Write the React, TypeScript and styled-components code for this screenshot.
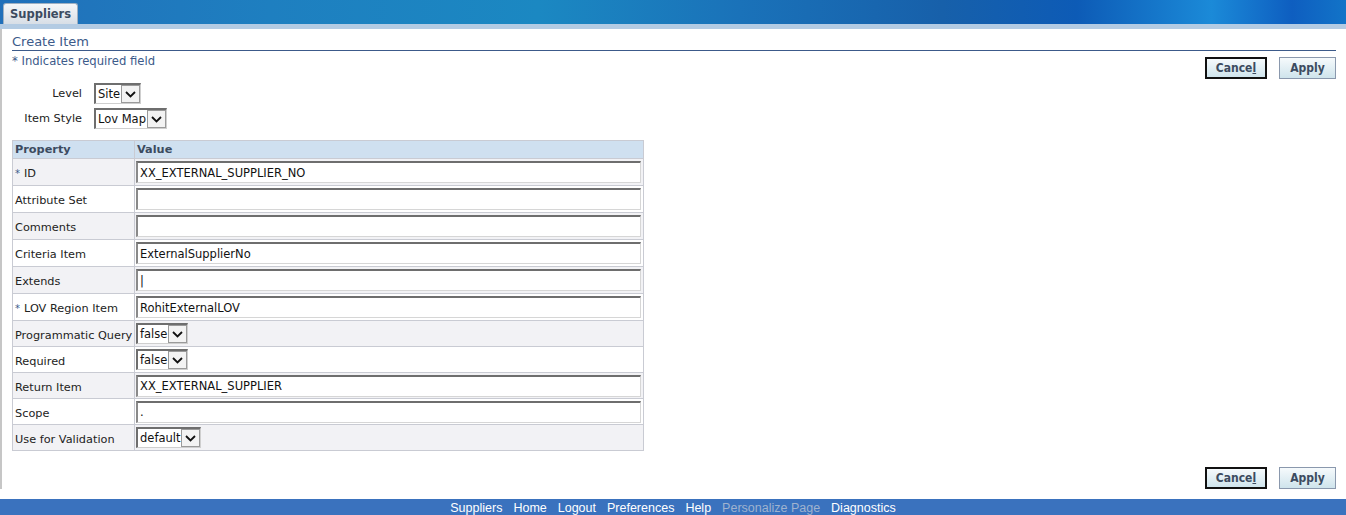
import styled, { createGlobalStyle } from "styled-components";

const GlobalStyle = createGlobalStyle`
  body {
    margin: 0;
    background: #ffffff;
    font-family: "DejaVu Sans", Tahoma, sans-serif;
  }
`;

const colors = {
  navy: "#3c5a8a",
  slate: "#3c4b60",
  cellBorder: "#c9cbd3",
  headerCell: "#cfe0f0",
  stripe: "#f2f2f5",
};

type RowType = "text" | "select";

interface PropRow {
  label: string;
  required?: boolean;
  type: RowType;
  value: string;
}

const rows: PropRow[] = [
  { label: "ID", required: true, type: "text", value: "XX_EXTERNAL_SUPPLIER_NO" },
  { label: "Attribute Set", type: "text", value: "" },
  { label: "Comments", type: "text", value: "" },
  { label: "Criteria Item", type: "text", value: "ExternalSupplierNo" },
  { label: "Extends", type: "text", value: "|" },
  { label: "LOV Region Item", required: true, type: "text", value: "RohitExternalLOV" },
  { label: "Programmatic Query", type: "select", value: "false" },
  { label: "Required", type: "select", value: "false" },
  { label: "Return Item", type: "text", value: "XX_EXTERNAL_SUPPLIER" },
  { label: "Scope", type: "text", value: "." },
  { label: "Use for Validation", type: "select", value: "default" },
];

const Page = styled.div`
  width: 1346px;
  height: 515px;
  overflow: hidden;
`;

const Banner = styled.div`
  height: 24px;
  display: flex;
  align-items: flex-end;
  padding-left: 3px;
  background: linear-gradient(
    90deg,
    #2170ba 0%,
    #1e7fc0 20%,
    #1b88c2 40%,
    #1a72b9 55%,
    #1760aa 70%,
    #0d5bb6 80%,
    #1b8ad8 90%,
    #0e5ec0 96%,
    #1274c8 100%
  );
`;

const Tab = styled.div`
  height: 20px;
  padding: 0 6px;
  display: flex;
  align-items: center;
  border: 1px solid #9fb0c2;
  border-bottom: none;
  border-radius: 3px 3px 0 0;
  background: linear-gradient(#f5f7f9, #d7dee6);
  color: ${colors.slate};
  font-size: 11.5px;
  font-weight: bold;
`;

const Stripe = styled.div`
  height: 5px;
  background: #b3cbe3;
`;

const Body = styled.div`
  display: flex;
  flex-direction: column;
  border-left: 2px solid #c6c6c6;
  padding: 0 10px 0 10px;
`;

const Title = styled.h1`
  margin: 4px 0 0;
  font-size: 13px;
  font-weight: normal;
  line-height: 17px;
  color: ${colors.navy};
  border-bottom: 1px solid ${colors.navy};
`;

const TopRow = styled.div`
  display: flex;
  justify-content: space-between;
  align-items: flex-start;
`;

const Hint = styled.div`
  margin-top: 3px;
  font-size: 11.6px;
  line-height: 14px;
  color: ${colors.navy};
`;

const Buttons = styled.div<{ $top: number }>`
  display: flex;
  gap: 12px;
  margin-top: ${({ $top }) => $top}px;
`;

const Button = styled.button<{ $focused?: boolean; $width: number }>`
  width: ${({ $width }) => $width}px;
  height: 22px;
  padding: 0;
  border: ${({ $focused }) => ($focused ? "2px solid #111" : "1px solid #8a98ad")};
  background: linear-gradient(#f6fafc, #cfe4ec);
  color: ${colors.slate};
  font-family: "DejaVu Sans Condensed", "DejaVu Sans", sans-serif;
  font-size: 12px;
  font-weight: bold;
  cursor: pointer;

  u {
    text-decoration-thickness: 1px;
  }
`;

const Form = styled.div`
  display: flex;
  flex-direction: column;
  gap: 4px;
  margin-top: 4px;
`;

const FormRow = styled.div`
  display: flex;
  align-items: center;
  gap: 12px;
`;

const FormLabel = styled.label`
  width: 70px;
  text-align: right;
  font-size: 11.3px;
  color: #222;
`;

const SelectBox = styled.div`
  display: inline-flex;
  align-items: stretch;
  height: 21px;
  box-sizing: border-box;
  border-top: 2px solid #6e6e6e;
  border-left: 2px solid #6e6e6e;
  border-right: 1px solid #cfcfcf;
  border-bottom: 1px solid #cfcfcf;
  background: #fff;
  font-size: 11.5px;
  color: #111;
`;

const SelectText = styled.span`
  display: flex;
  align-items: center;
  padding: 0 1px 0 2px;
`;

const Arrow = styled.span`
  width: 17px;
  display: flex;
  align-items: center;
  justify-content: center;
  border: 1px solid #9a9a9a;
  background: #f3f3f3;
`;

const Table = styled.table`
  margin-top: 11px;
  width: 632px;
  border-collapse: collapse;
  border: 1px solid #cfd1d8;
  font-size: 11.3px;
  color: #222;
`;

const Th = styled.th<{ $width?: number }>`
  width: ${({ $width }) => ($width ? `${$width}px` : "auto")};
  height: 17px;
  padding: 0 2px;
  text-align: left;
  background: ${colors.headerCell};
  border: 1px solid ${colors.cellBorder};
  color: ${colors.slate};
  font-weight: bold;
`;

const Tr = styled.tr<{ $shade: boolean }>`
  background: ${({ $shade }) => ($shade ? colors.stripe : "#ffffff")};
`;

const LabelCell = styled.td<{ $height: number }>`
  height: ${({ $height }) => $height}px;
  padding: 3px 0 0 2px;
  border: 1px solid ${colors.cellBorder};
  white-space: nowrap;
`;

const ValueCell = styled.td`
  padding: 1px;
  border: 1px solid ${colors.cellBorder};
`;

const Star = styled.span`
  color: ${colors.navy};
  font-size: 10px;
  margin-right: 4px;
`;

const TextInput = styled.div`
  width: 505px;
  height: 22px;
  box-sizing: border-box;
  display: flex;
  align-items: center;
  padding-left: 2px;
  border-top: 2px solid #6e6e6e;
  border-left: 2px solid #8a8a8a;
  border-right: 1px solid #d6d6d6;
  border-bottom: 1px solid #d6d6d6;
  background: #fff;
  font-size: 11.5px;
  color: #111;
`;

const BottomButtons = styled.div`
  display: flex;
  justify-content: flex-end;
  margin-top: 16px;
`;

const Footer = styled.div`
  height: 15px;
  margin-top: 10px;
  display: flex;
  justify-content: center;
  gap: 11px;
  padding-top: 2px;
  background: #3a72be;
  font-family: "Liberation Sans", Arial, sans-serif;
  font-size: 12.5px;
  line-height: 14px;
`;

const FooterLink = styled.span<{ $muted?: boolean }>`
  color: ${({ $muted }) => ($muted ? "#9fb3cf" : "#ffffff")};
`;

const Chevron = () => (
  <svg width="11" height="7" viewBox="0 0 11 7">
    <path d="M1 1 L5.5 5.5 L10 1" fill="none" stroke="#111" strokeWidth="1.8" />
  </svg>
);

const Select = ({ value }: { value: string }) => (
  <SelectBox>
    <SelectText>{value}</SelectText>
    <Arrow>
      <Chevron />
    </Arrow>
  </SelectBox>
);

const ActionButtons = ({ top }: { top: number }) => (
  <Buttons $top={top}>
    <Button $focused $width={62}>
      Cance<u>l</u>
    </Button>
    <Button $width={57}>Apply</Button>
  </Buttons>
);

const footerLinks = [
  "Suppliers",
  "Home",
  "Logout",
  "Preferences",
  "Help",
  "Personalize Page",
  "Diagnostics",
];

export default function App() {
  return (
    <Page>
      <GlobalStyle />
      <Banner>
        <Tab>Suppliers</Tab>
      </Banner>
      <Stripe />
      <Body>
        <Title>Create Item</Title>
        <TopRow>
          <Hint>* Indicates required field</Hint>
          <ActionButtons top={6} />
        </TopRow>
        <Form>
          <FormRow>
            <FormLabel>Level</FormLabel>
            <Select value="Site" />
          </FormRow>
          <FormRow>
            <FormLabel>Item Style</FormLabel>
            <Select value="Lov Map" />
          </FormRow>
        </Form>
        <Table>
          <thead>
            <tr>
              <Th $width={117}>Property</Th>
              <Th>Value</Th>
            </tr>
          </thead>
          <tbody>
            {rows.map((row, i) => (
              <Tr key={row.label} $shade={i % 2 === 0}>
                <LabelCell $height={i < 6 ? 23 : 22}>
                  {row.required && <Star>*</Star>}
                  {row.label}
                </LabelCell>
                <ValueCell>
                  {row.type === "text" ? (
                    <TextInput>{row.value}</TextInput>
                  ) : (
                    <Select value={row.value} />
                  )}
                </ValueCell>
              </Tr>
            ))}
          </tbody>
        </Table>
        <BottomButtons>
          <ActionButtons top={0} />
        </BottomButtons>
      </Body>
      <Footer>
        {footerLinks.map((link) => (
          <FooterLink key={link} $muted={link === "Personalize Page"}>
            {link}
          </FooterLink>
        ))}
      </Footer>
    </Page>
  );
}
